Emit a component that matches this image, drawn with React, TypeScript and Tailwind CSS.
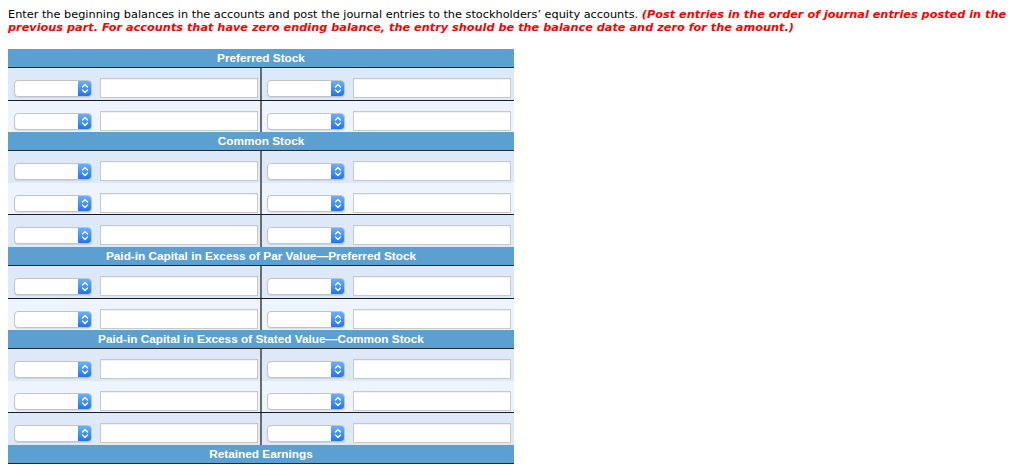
type Tone = 'dark' | 'light';

type Row = { tone: Tone; line?: boolean };

type Section = { title: string; rows: Row[] };

const sections: Section[] = [
  { title: 'Preferred Stock', rows: [{ tone: 'dark', line: true }, { tone: 'light' }] },
  {
    title: 'Common Stock',
    rows: [{ tone: 'dark' }, { tone: 'light', line: true }, { tone: 'dark' }],
  },
  {
    title: 'Paid-in Capital in Excess of Par Value—Preferred Stock',
    rows: [{ tone: 'dark', line: true }, { tone: 'light' }],
  },
  {
    title: 'Paid-in Capital in Excess of Stated Value—Common Stock',
    rows: [{ tone: 'dark' }, { tone: 'light', line: true }, { tone: 'dark' }],
  },
  { title: 'Retained Earnings', rows: [] },
];

function UpDown() {
  return (
    <svg viewBox="0 0 14 17" className="w-[14px] h-[17px]" aria-hidden="true">
      <path d="M4.5 7 L7 4.5 L9.5 7" fill="none" stroke="white" strokeWidth="1.3" strokeLinecap="round" strokeLinejoin="round" />
      <path d="M4.5 10 L7 12.5 L9.5 10" fill="none" stroke="white" strokeWidth="1.3" strokeLinecap="round" strokeLinejoin="round" />
    </svg>
  );
}

function DateSelect() {
  return (
    <div className="flex h-[17px] w-[78px] shrink-0 rounded-[4px] border border-[#c3c3c3] bg-white overflow-hidden shadow-[0_1px_0_rgba(0,0,0,0.08)]">
      <select
        aria-label="Date"
        className="appearance-none flex-1 min-w-0 bg-transparent text-[11px] outline-none"
        defaultValue=""
      >
        <option value=""></option>
      </select>
      <span className="flex items-center justify-center w-[14px] -my-px -mr-px rounded-r-[4px] bg-gradient-to-b from-[#6cb3fc] to-[#1b6ff3]">
        <UpDown />
      </span>
    </div>
  );
}

function AmountInput() {
  return (
    <input
      type="text"
      aria-label="Amount"
      className="h-[20px] w-[158px] shrink-0 border border-[#c8c8c8] bg-white shadow-[inset_0_1px_1px_rgba(0,0,0,0.06)] outline-none text-[11px] px-1"
    />
  );
}

function EntryRow({ row }: { row: Row }) {
  const bg = row.tone === 'dark' ? 'bg-[#dde9f8]' : 'bg-[#edf4fd]';
  const height = row.tone === 'dark' ? (row.line ? 'h-[33px]' : 'h-[32px]') : row.line ? 'h-[32px]' : 'h-[31px]';
  return (
    <div className={`flex ${bg} ${height} ${row.line ? 'border-b border-[#1c1c1c]' : ''}`}>
      <div className="w-[252px] pl-[6px] pt-[10px]">
        <div className="flex items-center gap-[8px] h-[20px]">
          <DateSelect />
          <AmountInput />
        </div>
      </div>
      <div className="w-[2px] bg-[#6b6b6b]" />
      <div className="w-[252px] pl-[5px] pt-[10px]">
        <div className="flex items-center gap-[8px] h-[20px]">
          <DateSelect />
          <AmountInput />
        </div>
      </div>
    </div>
  );
}

export default function App() {
  return (
    <div className="bg-white min-h-[466px] font-['DejaVu_Sans',Verdana,sans-serif] text-black">
      <p className="px-[8px] pt-[8px] text-[11.3px] leading-[13px] w-[1024px]">
        Enter the beginning balances in the accounts and post the journal entries to the stockholders’ equity accounts.{' '}
        <strong className="italic font-bold text-[#ff0000]">
          (Post entries in the order of journal entries posted in the previous part. For accounts that have zero ending
          balance, the entry should be the balance date and zero for the amount.)
        </strong>
      </p>

      <div className="ml-[8px] mt-[15px] w-[506px]">
        {sections.map((section) => (
          <div key={section.title}>
            <div className="h-[19px] border-b border-[#1f2a33] bg-[#5ba0d0] text-center text-white font-bold text-[11.8px] leading-[18px] font-['Liberation_Sans',Arial,sans-serif]">
              {section.title}
            </div>
            {section.rows.map((row, i) => (
              <EntryRow key={i} row={row} />
            ))}
          </div>
        ))}
      </div>
    </div>
  );
}
